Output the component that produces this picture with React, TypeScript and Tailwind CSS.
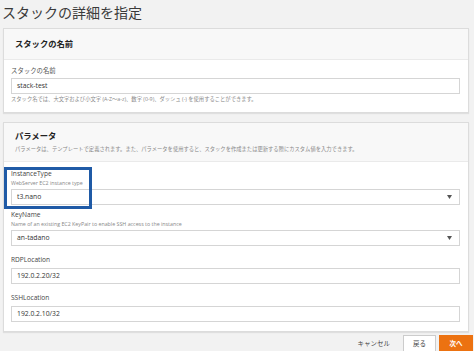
const jp = { fontFamily: '"Open Sans", "Noto Sans CJK JP", sans-serif' };

function TextInput({ value, select }: { value: string; select?: boolean }) {
    return (
        <div className="flex h-[16px] items-center justify-between border border-[#d5d5d5] bg-white pl-[5px] pr-[7px] text-[6.8px] text-[#333]">
            <span>{value}</span>
            {select && (
                <svg width="5" height="4" viewBox="0 0 5 4">
                    <path d="M0 0h5L2.5 4z" fill="#555" />
                </svg>
            )}
        </div>
    );
}

function Field({
    label,
    desc,
    value,
    select,
    className,
}: {
    label: string;
    desc?: string;
    value: string;
    select?: boolean;
    className?: string;
}) {
    return (
        <div className={className}>
            <div className="text-[6.6px] leading-[10px] text-[#444]">{label}</div>
            {desc && <div className="text-[5.3px] leading-[8px] text-[#888]">{desc}</div>}
            <div className={desc ? "mt-[2px]" : "mt-[3px]"}>
                <TextInput value={value} select={select} />
            </div>
        </div>
    );
}

export default function App() {
    return (
        <div style={jp} className="relative h-[351px] w-[474px] overflow-hidden bg-[#f2f2f2]">
            <h1 className="pl-[2px] pt-[2px] text-[14px] leading-[22px] font-normal text-[#3a3a3a]">
                スタックの詳細を指定
            </h1>

            <div className="mt-[4px] ml-[3px] mr-[5px] border border-[#dcdcdc] bg-white shadow-[0_1px_1px_rgba(0,0,0,0.08)]">
                <div className="flex h-[31px] items-center border-b border-[#eaeaea] bg-[#f8f8f8] pl-[11px] text-[8.3px] font-bold text-[#222]">
                    スタックの名前
                </div>
                <div className="pl-[7px] pr-[8px] pt-[5px] pb-[8px]">
                    <div className="text-[6.4px] leading-[12px] text-[#555]">スタックの名前</div>
                    <div className="mt-[1px]">
                        <TextInput value="stack-test" />
                    </div>
                    <div className="text-[5.3px] leading-[10px] text-[#888]">
                        スタック名では、大文字および小文字 (A-Z～a-z)、数字 (0-9)、ダッシュ (-) を使用することができます。
                    </div>
                </div>
            </div>

            <div className="mt-[9px] ml-[3px] mr-[5px] border border-[#dcdcdc] bg-white shadow-[0_1px_1px_rgba(0,0,0,0.08)]">
                <div className="border-b border-[#eaeaea] bg-[#f8f8f8] pl-[11px] pt-[5px] pb-[7px]">
                    <div className="text-[8.3px] leading-[16px] font-bold text-[#222]">パラメータ</div>
                    <div className="text-[5.3px] leading-[10px] text-[#888]">
                        パラメータは、テンプレートで定義されます。また、パラメータを使用すると、スタックを作成または更新する際にカスタム値を入力できます。
                    </div>
                </div>
                <div className="pl-[7px] pr-[8px] pt-[7px] pb-[9px]">
                    <Field label="InstanceType" desc="WebServer EC2 instance type" value="t3.nano" select />
                    <Field
                        className="mt-[5px]"
                        label="KeyName"
                        desc="Name of an existing EC2 KeyPair to enable SSH access to the instance"
                        value="an-tadano"
                        select
                    />
                    <Field className="mt-[9px]" label="RDPLocation" value="192.0.2.20/32" />
                    <Field className="mt-[9px]" label="SSHLocation" value="192.0.2.10/32" />
                </div>
            </div>

            <div className="mt-[3px] flex items-center justify-end pr-[1px]">
                <span className="mr-[13px] text-[6.5px] text-[#444]">キャンセル</span>
                <button className="h-[17px] w-[33px] border border-[#ccc] bg-white text-[6.5px] text-[#444]">
                    戻る
                </button>
                <button className="ml-[3px] h-[17px] w-[34px] bg-[#ec7211] text-[6.5px] font-bold text-white">
                    次へ
                </button>
            </div>

            <div className="absolute left-[4px] top-[167px] h-[42px] w-[88px] border-[3px] border-[#1f5aa6]" />
        </div>
    );
}
